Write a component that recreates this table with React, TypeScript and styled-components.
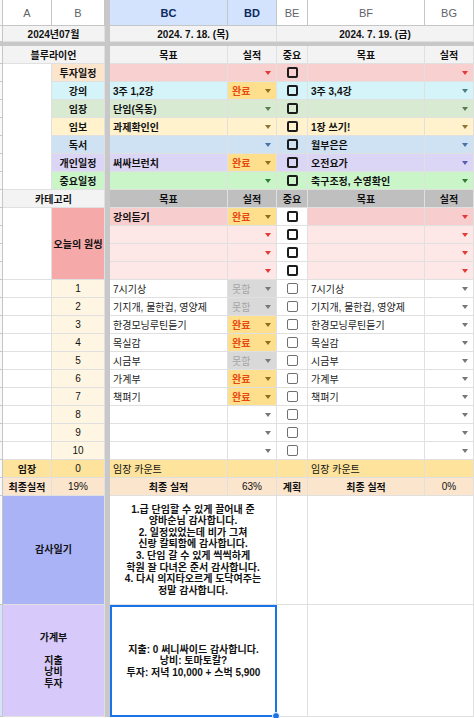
import React from "react";
import styled, { createGlobalStyle } from "styled-components";

const Global = createGlobalStyle`
  *, *::before, *::after { box-sizing: border-box; }
  html, body { margin: 0; padding: 0; background: #fff; overflow: hidden; }
  body { font-family: "Liberation Sans", Arial, "Noto Sans CJK KR", sans-serif; }
`;

const LINE = "#e0e0e0";
const HEAD_LINE = "#c4c7c5";

const Sheet = styled.div`
  display: grid;
  grid-template-columns: 3px 49px 53px 5px 118px 49px 31px 117px 49px;
  grid-template-rows: 26px 16px 4px repeat(25, 18px) 109px 112px;
  grid-auto-rows: 18px;
  width: 474px;
  height: 718px;
  overflow: hidden;
  font-size: 10px;
  color: #000;
`;

const FrozenV = styled.div`
  grid-column: 4;
  grid-row: 1 / -1;
  background: #c8c8c8;
`;

const FrozenH = styled.div`
  grid-column: 1 / -1;
  grid-row: 3;
  background: #c8c8c8;
`;

const Strip = styled.div<{ $sel?: boolean }>`
  background: ${(p) => (p.$sel ? "#d3e3fd" : "#f8f9fa")};
  border-right: 1px solid ${HEAD_LINE};
  border-bottom: 1px solid ${HEAD_LINE};
`;

const ColHead = styled.div<{ $sel?: boolean }>`
  display: flex;
  align-items: center;
  justify-content: center;
  background: ${(p) => (p.$sel ? "#d3e3fd" : "#ffffff")};
  color: ${(p) => (p.$sel ? "#0b2a5e" : "#5f6368")};
  font-weight: ${(p) => (p.$sel ? 700 : 400)};
  font-size: 11px;
  border-right: 1px solid ${HEAD_LINE};
  border-bottom: 1px solid ${HEAD_LINE};
`;

type CellProps = {
  $bg?: string;
  $align?: "left" | "center";
  $bold?: boolean;
  $span?: number;
  $rows?: number;
  $color?: string;
};

const Cell = styled.div<CellProps>`
  grid-column: span ${(p) => p.$span ?? 1};
  grid-row: span ${(p) => p.$rows ?? 1};
  display: flex;
  align-items: center;
  justify-content: ${(p) => (p.$align === "center" ? "center" : "flex-start")};
  min-width: 0;
  padding: 0 3px;
  background: ${(p) => p.$bg ?? "#ffffff"};
  color: ${(p) => p.$color ?? "#111"};
  font-weight: ${(p) => (p.$bold ? 700 : 400)};
  border-right: 1px solid ${LINE};
  border-bottom: 1px solid ${LINE};
  white-space: nowrap;
  overflow: hidden;
`;

const DropCell = styled(Cell)`
  justify-content: space-between;
  padding: 0 5px 0 4px;
`;

const Arrow = styled.span<{ $c: string }>`
  flex: none;
  width: 0;
  height: 0;
  border-left: 3.5px solid transparent;
  border-right: 3.5px solid transparent;
  border-top: 4px solid ${(p) => p.$c};
`;

const CheckCell = styled(Cell)`
  justify-content: center;
  padding: 0;
`;

const Box = styled.span<{ $heavy?: boolean }>`
  width: 11px;
  height: 11px;
  border: ${(p) => (p.$heavy ? "2px solid #1c1c1c" : "1.4px solid #707070")};
  border-radius: 2px;
  background: transparent;
`;

const NoteCell = styled(Cell)`
  justify-content: center;
  text-align: center;
  white-space: pre-line;
  line-height: 11.6px;
  font-weight: 700;
`;

const SelectedNote = styled(NoteCell)`
  position: relative;
  overflow: visible;
  border: 2px solid #1a73e8;
`;

const Handle = styled.span`
  position: absolute;
  right: -5px;
  bottom: -5px;
  width: 8px;
  height: 8px;
  border-radius: 50%;
  background: #1a73e8;
  border: 1px solid #fff;
`;

const C = {
  header: "#f3f3f3",
  gray: "#bfbfbf",
  peach: "#fce5cd",
  pink: "#f8cdcd",
  lightPink: "#fde8e7",
  salmon: "#f5a9a9",
  cream: "#fef6e2",
  yellow: "#fde39b",
  doneBg: "#fedf8d",
  doneText: "#e8490f",
  doneArrow: "#8a6d1d",
  failBg: "#d9d9d9",
  failText: "#a6a6a6",
  grayArrow: "#777777",
  periwinkle: "#aab3f6",
  lavender: "#d8c9fb",
};

type Status = "완료" | "못함" | undefined;

function StatusCell({ st, bg, arrow }: { st: Status; bg: string; arrow: string }) {
  if (st === "완료")
    return (
      <DropCell $bg={C.doneBg} $color={C.doneText} $bold>
        완료<Arrow $c={C.doneArrow} />
      </DropCell>
    );
  if (st === "못함")
    return (
      <DropCell $bg={C.failBg} $color={C.failText}>
        못함<Arrow $c={C.grayArrow} />
      </DropCell>
    );
  return (
    <DropCell $bg={bg}>
      <span />
      <Arrow $c={arrow} />
    </DropCell>
  );
}

type Plan = {
  label: string;
  labelBg: string;
  bg: string;
  arrow: string;
  goal?: string;
  st?: Status;
  next?: string;
};

const plans: Plan[] = [
  { label: "투자일정", labelBg: C.peach, bg: "#f9d0d0", arrow: "#e53935" },
  { label: "강의", labelBg: "#d4f4fa", bg: "#d4f4fa", arrow: "#4d7d84", goal: "3주 1,2강", st: "완료", next: "3주 3,4강" },
  { label: "임장", labelBg: "#d9ead3", bg: "#d9ead3", arrow: "#5b7b52", goal: "단임(옥동)" },
  { label: "임보", labelBg: "#fff2cc", bg: "#fff2cc", arrow: "#8a7535", goal: "과제확인인", next: "1장 쓰기!" },
  { label: "독서", labelBg: "#cfe2f3", bg: "#cfe2f3", arrow: "#4a72a8", next: "월부은은" },
  { label: "개인일정", labelBg: "#dcd6f6", bg: "#dcd6f6", arrow: "#5a5fa8", goal: "써싸브런치", st: "완료", next: "오전요가" },
  { label: "중요일정", labelBg: "#c9f5c9", bg: "#c9f5c9", arrow: "#2e7d32", next: "축구조정, 수영확인" },
];

type OneThing = { goal?: string; st?: Status; bg: string };
const oneThings: OneThing[] = [
  { goal: "강의듣기", st: "완료", bg: C.pink },
  { bg: C.lightPink },
  { bg: C.lightPink },
  { bg: C.lightPink },
];

type Daily = { n: number; goal?: string; st?: Status };
const daily: Daily[] = [
  { n: 1, goal: "7시기상", st: "못함" },
  { n: 2, goal: "기지개, 물한컵, 영양제", st: "못함" },
  { n: 3, goal: "한경모닝루틴듣기", st: "완료" },
  { n: 4, goal: "목실감", st: "완료" },
  { n: 5, goal: "시금부", st: "못함" },
  { n: 6, goal: "가계부", st: "완료" },
  { n: 7, goal: "책펴기", st: "완료" },
  { n: 8 },
  { n: 9 },
  { n: 10 },
];

const thanks = `1.급 단임할 수 있게 끌어내 준
양바순님 감사합니다.
2. 일정있었는데 비가 그쳐
신랑 칼퇴함에 감사합니다.
3. 단임 갈 수 있게 씩씩하게
학원 잘 다녀온 준서 감사합니다.
4. 다시 의지타오르게 도닥여주는
정말 감사합니다.`;

const budget = `지출: 0 써니싸이드 감사합니다.
낭비: 토마토칼?
투자: 저녁 10,000 + 스벅 5,900`;

const budgetLabel = `가계부

지출
낭비
투자`;

function HeaderCells({ bg }: { bg: string }) {
  return (
    <>
      <Cell $bg={bg} $align="center" $bold>목표</Cell>
      <Cell $bg={bg} $align="center" $bold>실적</Cell>
      <Cell $bg={bg} $align="center" $bold>중요</Cell>
      <Cell $bg={bg} $align="center" $bold>목표</Cell>
      <Cell $bg={bg} $align="center" $bold>실적</Cell>
    </>
  );
}

export default function App() {
  return (
    <>
      <Global />
      <Sheet>
        <FrozenV />
        <FrozenH />

        {/* column letters */}
        <Strip />
        <ColHead>A</ColHead>
        <ColHead>B</ColHead>
        <ColHead $sel>BC</ColHead>
        <ColHead $sel>BD</ColHead>
        <ColHead>BE</ColHead>
        <ColHead>BF</ColHead>
        <ColHead>BG</ColHead>

        {/* dates */}
        <Strip />
        <Cell $span={2} $bg={C.header} $align="center" $bold>2024년07월</Cell>
        <Cell $span={2} $bg={C.header} $align="center" $bold>2024. 7. 18. (목)</Cell>
        <Cell $span={3} $bg={C.header} $align="center" $bold>2024. 7. 19. (금)</Cell>

        {/* plan header */}
        <Strip />
        <Cell $span={2} $bg={C.header} $align="center" $bold>블루라이언</Cell>
        <HeaderCells bg={C.header} />

        {plans.map((p, i) => (
          <React.Fragment key={p.label}>
            <Strip />
            {i === 0 && <Cell $rows={plans.length} />}
            <Cell $bg={p.labelBg} $align="center" $bold>{p.label}</Cell>
            <Cell $bg={p.bg} $bold>{p.goal}</Cell>
            <StatusCell st={p.st} bg={p.bg} arrow={p.arrow} />
            <CheckCell $bg={p.bg}><Box $heavy /></CheckCell>
            <Cell $bg={p.bg} $bold>{p.next}</Cell>
            <StatusCell st={undefined} bg={p.bg} arrow={p.arrow} />
          </React.Fragment>
        ))}

        {/* category header */}
        <Strip />
        <Cell $span={2} $bg={C.header} $align="center" $bold>카테고리</Cell>
        <HeaderCells bg={C.gray} />

        {oneThings.map((o, i) => (
          <React.Fragment key={`one-${i}`}>
            <Strip />
            {i === 0 && (
              <>
                <Cell $rows={oneThings.length} />
                <Cell $rows={oneThings.length} $bg={C.salmon} $align="center" $bold>오늘의 원씽</Cell>
              </>
            )}
            <Cell $bg={o.bg} $bold>{o.goal}</Cell>
            <StatusCell st={o.st} bg={o.bg} arrow="#e53935" />
            <CheckCell><Box $heavy /></CheckCell>
            <Cell $bg={o.bg} />
            <StatusCell st={undefined} bg={o.bg} arrow="#e53935" />
          </React.Fragment>
        ))}

        {daily.map((d) => (
          <React.Fragment key={`d-${d.n}`}>
            <Strip />
            <Cell />
            <Cell $bg={C.cream} $align="center">{d.n}</Cell>
            <Cell $color="#222">{d.goal}</Cell>
            <StatusCell st={d.st} bg="#ffffff" arrow={C.grayArrow} />
            <CheckCell><Box /></CheckCell>
            <Cell $color="#222">{d.goal}</Cell>
            <StatusCell st={undefined} bg="#ffffff" arrow={C.grayArrow} />
          </React.Fragment>
        ))}

        {/* visit count */}
        <Strip />
        <Cell $bg={C.yellow} $align="center" $bold>임장</Cell>
        <Cell $bg={C.yellow} $align="center">0</Cell>
        <Cell $bg={C.yellow}>임장 카운트</Cell>
        <Cell $bg={C.yellow} />
        <Cell $bg={C.yellow} />
        <Cell $bg={C.yellow}>임장 카운트</Cell>
        <Cell $bg={C.yellow} />

        {/* final result */}
        <Strip />
        <Cell $bg={C.peach} $align="center" $bold>최종실적</Cell>
        <Cell $bg={C.peach} $align="center">19%</Cell>
        <Cell $bg={C.peach} $align="center" $bold>최종 실적</Cell>
        <Cell $bg={C.peach} $align="center">63%</Cell>
        <Cell $bg={C.peach} $align="center" $bold>계획</Cell>
        <Cell $bg={C.peach} $align="center" $bold>최종 실적</Cell>
        <Cell $bg={C.peach} $align="center">0%</Cell>

        {/* gratitude diary */}
        <Strip />
        <NoteCell $span={2} $bg={C.periwinkle}>감사일기</NoteCell>
        <NoteCell $span={2}>{thanks}</NoteCell>
        <Cell />
        <Cell $span={2} />

        {/* household budget */}
        <Strip $sel />
        <NoteCell $span={2} $bg={C.lavender}>{budgetLabel}</NoteCell>
        <SelectedNote $span={2}>
          {budget}
          <Handle />
        </SelectedNote>
        <Cell />
        <Cell $span={2} />
      </Sheet>
    </>
  );
}
